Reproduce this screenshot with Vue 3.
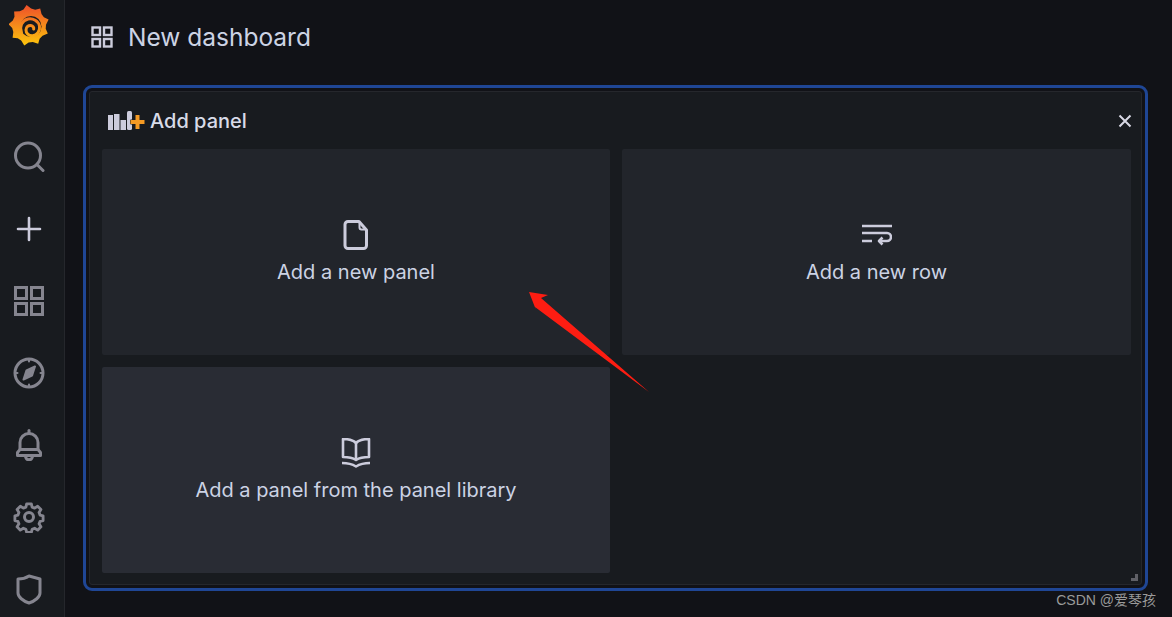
<script setup>
const navIcons = ['search', 'plus', 'grid', 'compass', 'bell', 'gear', 'shield']

const cards = [
  { label: 'Add a new panel', icon: 'file' },
  { label: 'Add a new row', icon: 'row' },
  { label: 'Add a panel from the panel library', icon: 'book', light: true }
]

// gear outline of the logo
const gearPoints = (() => {
  const pts = []
  const teeth = 9
  for (let i = 0; i < teeth; i++) {
    const a = (i / teeth) * Math.PI * 2 - 1.2
    const step = (Math.PI * 2) / teeth
    const add = (r, t) => pts.push(`${(20 + r * Math.cos(a + t * step)).toFixed(1)},${(20.5 + r * Math.sin(a + t * step)).toFixed(1)}`)
    add(17, 0)
    add(20.5, 0.3)
    add(17, 0.65)
  }
  return pts.join(' ')
})()
</script>

<template>
  <div class="page">
    <aside class="sidebar">
      <svg class="logo" viewBox="0 0 40 42" width="40" height="42">
        <defs>
          <linearGradient id="logo-grad" x1="0" y1="0" x2="0" y2="1">
            <stop offset="0" stop-color="#ee4f2a" />
            <stop offset="1" stop-color="#fcc60c" />
          </linearGradient>
          <linearGradient id="logo-grad2" gradientUnits="userSpaceOnUse" x1="0" y1="2" x2="0" y2="40">
            <stop offset="0" stop-color="#ee4f2a" />
            <stop offset="1" stop-color="#fcc60c" />
          </linearGradient>
        </defs>
        <polygon :points="gearPoints" fill="url(#logo-grad)" />
        <circle cx="22" cy="21.500" r="10.500" fill="#181b1f" />
        <path d="M12.500 27.500c-2.500-6 .5-12 6.500-13.500 5-1 10.500 2 11.500 7 .8 5-2.500 9.500-7 9.800-4 .2-6.500-2.500-6.500-5.800 0-3 2.500-5 5-4.500 2 .3 3 2 2.700 3.500" fill="none" stroke="url(#logo-grad2)" stroke-width="3" stroke-linecap="round" />
      </svg>

      <nav class="nav">
        <a v-for="name in navIcons" :key="name" class="nav-item">
          <svg viewBox="0 0 32 32" width="32" height="32" fill="none" :stroke="name === 'plus' ? '#ccccdc' : '#85858f'" :stroke-width="name === 'plus' ? 2.6 : 3" stroke-linecap="round" stroke-linejoin="round">
            <template v-if="name === 'search'">
              <circle cx="15" cy="14.500" r="12.500" />
              <path d="M24.500 24l5.500 5.500" />
            </template>
            <template v-else-if="name === 'plus'">
              <path d="M16 5v22M5 16h22" />
            </template>
            <template v-else-if="name === 'grid'">
              <rect x="2.500" y="2.500" width="11" height="11" stroke-linejoin="miter" />
              <rect x="18.500" y="2.500" width="11" height="11" stroke-linejoin="miter" />
              <rect x="2.500" y="18.500" width="11" height="11" stroke-linejoin="miter" />
              <rect x="18.500" y="18.500" width="11" height="11" stroke-linejoin="miter" />
            </template>
            <template v-else-if="name === 'compass'">
              <circle cx="16" cy="16" r="14" />
              <path d="M22 9.500l-3 9.200-8.500 3.800 3-9.200z" fill="#85858f" stroke-width="2" />
              <path d="M16 2v2.500M16 27.500V30M2 16h2.500M27.500 16H30" stroke-width="2" />
            </template>
            <template v-else-if="name === 'bell'">
              <path d="M7 20v-6.500a9 9 0 0 1 18 0V20" />
              <path d="M16 1.500v3" />
              <path d="M7 20.500l-2.500 3v3h23v-3l-2.500-3z" />
              <path d="M12.500 27c0 5 7 5 7 0" />
            </template>
            <template v-else-if="name === 'gear'">
              <circle cx="16" cy="16" r="4.500" />
              <path transform="translate(16 16) scale(.94) translate(-16 -16)" d="M13.500 2h5l.8 3.500 2.700 1.100 3.200-2 3.500 3.500-2 3.200 1.100 2.700 3.200.8v5l-3.200.8-1.100 2.700 2 3.200-3.500 3.500-3.200-2-2.700 1.100-.8 3.200h-5l-.8-3.200-2.700-1.100-3.200 2-3.500-3.500 2-3.200-1.100-2.700-3.200-.8v-5l3.200-.8 1.100-2.700-2-3.200 3.500-3.500 3.200 2 2.700-1.100z" />
            </template>
            <template v-else>
              <path d="M16 3l11 3v14c0 4-5 8-11 10-6-2-11-6-11-10V6c4 0 8-1 11-3z" />
            </template>
          </svg>
        </a>
      </nav>
    </aside>

    <main class="main">
      <header class="topbar">
        <svg viewBox="0 0 24 24" width="24" height="24" fill="none" stroke="#ccccdc" stroke-width="2.400">
          <rect x="2.500" y="2.500" width="7.500" height="7.500" />
          <rect x="14" y="2.500" width="7.500" height="7.500" />
          <rect x="2.500" y="14" width="7.500" height="7.500" />
          <rect x="14" y="14" width="7.500" height="7.500" />
        </svg>
        <h1 class="title">New dashboard</h1>
      </header>

      <section class="panel-frame">
        <div class="panel">
          <div class="panel-head">
            <svg viewBox="0 0 37 19" width="37" height="19">
              <g fill="#ccccdc">
                <rect x="0" y="4" width="5" height="15" />
                <rect x="6" y="3" width="5.500" height="16" />
                <rect x="12.500" y="9" width="5.500" height="10" />
                <rect x="19" y="0" width="5" height="19" rx="1.500" />
              </g>
              <path d="M27.500 4h4v5h5v4h-5v5h-4v-5h-5V9h5z" fill="#f59a23" stroke="#181b1f" stroke-width="1" paint-order="stroke" />
            </svg>
            <span class="panel-title">Add panel</span>
            <svg class="close" viewBox="0 0 14 14" width="14" height="14" stroke="#d8d8e4" stroke-width="2" fill="none">
              <path d="M1.500 1.500l11 11M12.500 1.500l-11 11" />
            </svg>
          </div>

          <div class="cards">
            <div v-for="card in cards" :key="card.label" class="card" :class="{ light: card.light }">
              <svg viewBox="0 0 30 30" width="30" height="30" fill="none" stroke="#ccccdc" stroke-width="3" stroke-linejoin="round">
                <template v-if="card.icon === 'file'">
                  <path d="M7 1.500h11l7.500 8.500v15.500a3 3 0 0 1-3 3H7a3 3 0 0 1-3-3V4.500a3 3 0 0 1 3-3z" />
                  <path d="M18.500 3v4.500a2 2 0 0 0 2 2h4.500" stroke-width="2" />
                </template>
                <template v-else-if="card.icon === 'row'">
                  <path d="M0 6h30M0 13h25a4 4 0 0 1 0 8h-8M0 21h10" stroke-width="2.600" />
                  <path d="M20.500 17.500L17 21l3.500 3.500" stroke-width="2.600" />
                </template>
                <template v-else>
                  <path d="M15 5C12 2 8 1 2 1v18c6 0 10 1 13 3 3-2 7-3 13-3V1c-6 0-10 1-13 4z" stroke-width="2.600" />
                  <path d="M15 5v17" stroke-width="2.600" />
                  <path d="M1 25c6 0 10 1 14 3.500 4-2.500 8-3.500 14-3.500" stroke-width="2.600" />
                </template>
              </svg>
              <span class="card-label">{{ card.label }}</span>
            </div>
          </div>

          <span class="resize"></span>
        </div>
      </section>
    </main>

    <!-- red annotation arrow drawn over the screenshot -->
    <svg class="arrow" viewBox="0 0 1172 617" width="1172" height="617">
      <polygon points="529,292 548,295 541,298 649,392 535,307 536,310" fill="#fd1d12" />
    </svg>
    <span class="watermark">CSDN @爱琴孩</span>
  </div>
</template>

<style scoped>
.page {
  position: relative;
  display: flex;
  width: 1172px;
  height: 617px;
  overflow: hidden;
  background: #111217;
  color: #ccccdc;
  font-family: Inter, "Noto Sans CJK SC", sans-serif;
}

.sidebar {
  flex: none;
  width: 64px;
  border-right: 1px solid #25272c;
  background: #181b1f;
  box-sizing: content-box;
  display: flex;
  flex-direction: column;
  align-items: center;
}

.logo {
  margin-top: 5px;
  margin-left: -6px;
  flex: none;
}

.nav {
  margin-top: 94px;
  margin-left: -6px;
  display: flex;
  flex-direction: column;
  gap: 40px;
}

.nav-item {
  display: block;
  width: 32px;
  height: 32px;
}

.nav-item svg {
  display: block;
}

.main {
  flex: 1;
  min-width: 0;
  padding: 0 24px 0 18px;
  display: flex;
  flex-direction: column;
}

.topbar {
  flex: none;
  height: 85px;
  display: flex;
  align-items: flex-start;
  gap: 14px;
  padding: 25px 0 0 7px;
  box-sizing: border-box;
}

.title {
  margin: -2px 0 0;
  font-size: 24.500px;
  font-weight: 400;
  line-height: 28px;
  color: #ccd3e4;
}

.panel-frame {
  width: 1065px;
  height: 506px;
  box-sizing: border-box;
  border: 3px solid #1f4695;
  border-radius: 9px;
  padding: 3px;
  background: #111217;
}

.panel {
  position: relative;
  height: 100%;
  box-sizing: border-box;
  background: #181b1f;
  border: 1px solid #25272c;
  border-radius: 3px;
  padding: 0 12px 0 12px;
}

.panel-head {
  height: 57px;
  display: flex;
  align-items: center;
  gap: 5px;
  padding: 0 0 0 6px;
  box-sizing: border-box;
}

.panel-title {
  font-size: 20px;
  font-weight: 500;
  color: #d8dbe8;
}

.close {
  margin-left: auto;
  margin-right: -3px;
}

.cards {
  display: grid;
  grid-template-columns: 508px 509px;
  grid-auto-rows: 206px;
  gap: 12px;
}

.card {
  display: flex;
  flex-direction: column;
  align-items: center;
  justify-content: center;
  gap: 10px;
  box-sizing: border-box;
  background: #22252b;
  border-radius: 2px;
}

.card.light {
  background: #292c34;
}

.card svg {
  display: block;
}

.card-label {
  font-size: 20px;
  line-height: 24px;
  color: #ccd3e4;
}

.resize {
  position: absolute;
  right: 3px;
  bottom: 3px;
  width: 7px;
  height: 7px;
  border-right: 3px solid #5f6066;
  border-bottom: 3px solid #5f6066;
  box-sizing: border-box;
}

.arrow {
  position: absolute;
  left: 0;
  top: 0;
  pointer-events: none;
}

.watermark {
  position: absolute;
  right: 16px;
  top: 590px;
  font-family: "Liberation Sans", "Noto Sans CJK SC", sans-serif;
  font-size: 14px;
  line-height: 20px;
  color: #9a9a9a;
}
</style>
